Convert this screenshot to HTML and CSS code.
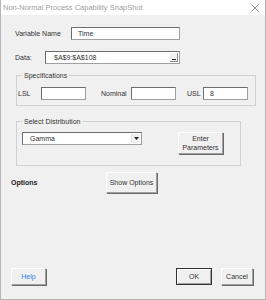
FILE: index.html
```html
<!DOCTYPE html>
<html>
<head>
<meta charset="utf-8">
<link rel="stylesheet" href="styles.css">
</head>
<body>
<div class="window">
  <div class="titlebar">
    <span class="title">Non-Normal Process Capability SnapShot</span>
    <svg class="close" width="8" height="8" viewBox="0 0 8 8"><path d="M0.5 0.5 L7.5 7.5 M7.5 0.5 L0.5 7.5" stroke="#8a8a8a" stroke-width="0.9" fill="none"/></svg>
  </div>
  <div class="content">
    <div class="row row-var">
      <span class="label lbl-var">Variable Name</span>
      <div class="input input-var">Time</div>
    </div>
    <div class="row row-data">
      <span class="label lbl-data">Data:</span>
      <div class="input input-data">$A$9:$A$108<span class="refbtn"><span class="refbar"></span></span></div>
    </div>
    <div class="group group-spec">
      <span class="legend">Specifications</span>
      <div class="spec-row">
        <span class="label lbl-lsl">LSL</span>
        <div class="input input-spec"></div>
        <span class="label lbl-nom">Nominal</span>
        <div class="input input-spec"></div>
        <span class="label lbl-usl">USL</span>
        <div class="input input-spec">8</div>
      </div>
    </div>
    <div class="group group-dist">
      <span class="legend">Select Distribution</span>
      <div class="dist-row">
        <div class="input combo">Gamma<span class="dropbtn"><svg width="5" height="3" viewBox="0 0 5 3"><path d="M0 0 H5 L2.5 3 Z" fill="#222"/></svg></span></div>
        <div class="btn btn-params">Enter<br>Parameters</div>
      </div>
    </div>
    <div class="options-row">
      <span class="options-label">Options</span>
      <div class="btn btn-show">Show Options</div>
    </div>
    <div class="footer">
      <div class="btn btn-help">Help</div>
      <div class="spacer"></div>
      <div class="btn btn-ok">OK</div>
      <div class="btn btn-cancel">Cancel</div>
    </div>
  </div>
</div>
</body>
</html>
```

FILE: styles.css
```css
html, body {
  margin: 0;
  padding: 0;
  background: #f0f0f0;
}
.window {
  width: 266px;
  height: 300px;
  box-sizing: border-box;
  border: 1px solid #b4b4b4;
  border-top: none;
  background: #f0f0f0;
  font-family: "Liberation Sans", Arial, sans-serif;
  font-size: 7px;
  color: #333;
  display: flex;
  flex-direction: column;
}
.titlebar {
  height: 15px;
  background: #ffffff;
  display: flex;
  align-items: center;
  padding: 0 5px 0 2px;
}
.title {
  font-size: 7.5px;
  color: #a0a0a0;
  flex: 1;
}
.close {
  display: block;
  margin-right: 1px;
}
.content {
  flex: 1;
  display: flex;
  flex-direction: column;
}
.row {
  display: flex;
  align-items: center;
  height: 13px;
}
.row-var { margin-top: 12px; }
.row-data { margin-top: 11px; }
.label { color: #333; }
.lbl-var { margin-left: 14px; width: 56px; }
.lbl-data { margin-left: 14px; width: 30px; }
.input {
  box-sizing: border-box;
  height: 13px;
  background: #fff;
  border: 1px solid #a0a0a0;
  border-top-color: #6d6d6d;
  border-left-color: #6d6d6d;
  display: flex;
  align-items: center;
  padding-left: 6px;
  position: relative;
  color: #333;
}
.input-var { width: 109px; }
.input-data { width: 135px; padding-left: 8px; }
.refbtn {
  position: absolute;
  right: 1px;
  top: 1px;
  width: 8px;
  height: 9px;
  background: #f0f0f0;
  border-right: 1px solid #8a8a8a;
  border-bottom: 1px solid #8a8a8a;
  box-sizing: border-box;
}
.refbar {
  position: absolute;
  left: 2px;
  bottom: 1px;
  width: 4px;
  height: 1px;
  background: #222;
}
.group {
  box-sizing: border-box;
  border: 1px solid #d0d0d0;
  margin-left: 15px;
}
.legend {
  display: block;
  width: max-content;
  margin: -5px 0 0 5px;
  padding: 0 2px;
  background: #f0f0f0;
  height: 9px;
  line-height: 9px;
}
.group-spec {
  margin-top: 11px;
  width: 240px;
  height: 31px;
}
.spec-row {
  display: flex;
  align-items: center;
  margin-top: 7px;
  height: 13px;
}
.lbl-lsl { margin-left: 1px; width: 23px; }
.lbl-nom { margin-left: 15px; width: 30px; }
.lbl-usl { margin-left: 11px; width: 16px; }
.input-spec { width: 45px; }
.group-dist {
  margin-top: 15px;
  width: 225px;
  height: 45px;
}
.dist-row {
  display: flex;
  align-items: flex-start;
  margin-top: 6px;
}
.combo {
  margin-left: 5px;
  width: 120px;
  padding-left: 7px;
}
.dropbtn {
  position: absolute;
  right: 1px;
  top: 1px;
  width: 8px;
  height: 9px;
  background: #f0f0f0;
  border-left: 1px solid #e0e0e0;
  display: flex;
  align-items: center;
  justify-content: center;
}
.dropbtn svg { display: block; }
.btn {
  box-sizing: border-box;
  background: #f0f0f0;
  border: 1px solid #fff;
  border-right-color: #a0a0a0;
  border-bottom-color: #a0a0a0;
  box-shadow: 1px 1px 0 #6a6a6a;
  display: flex;
  align-items: center;
  justify-content: center;
  text-align: center;
  color: #333;
}
.btn-params {
  margin-left: 36px;
  width: 45px;
  height: 22px;
  line-height: 9px;
}
.options-row {
  display: flex;
  align-items: center;
  margin-top: 6px;
  height: 21px;
}
.options-label {
  font-weight: bold;
  margin-left: 10px;
  width: 95px;
  color: #222;
}
.btn-show {
  width: 51px;
  height: 21px;
}
.footer {
  display: flex;
  align-items: center;
  margin-top: 75px;
  height: 17px;
}
.btn-help {
  margin-left: 10px;
  width: 35px;
  height: 17px;
  color: #2f86e6;
}
.spacer { flex: 1; }
.btn-ok {
  width: 36px;
  height: 17px;
  border: 1px solid #333;
  box-shadow: inset 1px 1px 0 #fff, inset -1px -1px 0 #a0a0a0;
}
.btn-cancel {
  margin-left: 9px;
  margin-right: 12px;
  width: 32px;
  height: 17px;
}
```
